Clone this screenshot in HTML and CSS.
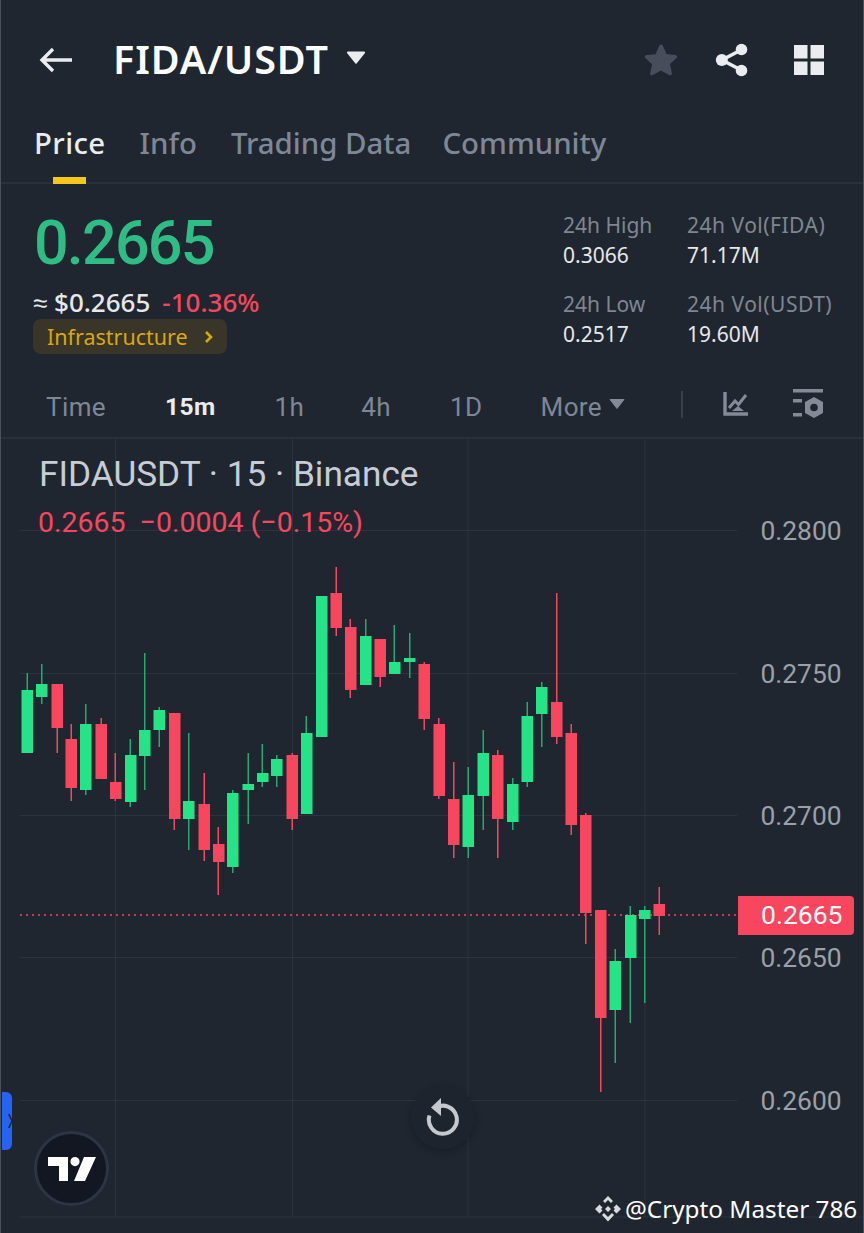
FILE: index.html
```html
<!DOCTYPE html>
<html lang="en">
<head>
<meta charset="utf-8">
<title>FIDA/USDT</title>
<link rel="stylesheet" href="styles.css">
</head>
<body>
<main class="app">
  <header class="topbar">
    <svg class="back" viewBox="0 0 36 30" width="36" height="30"><path d="M34 15H4M15 4 4 15l11 11" fill="none" stroke="#eaecef" stroke-width="3.4"/></svg>
    <h1 class="pair">FIDA/USDT</h1>
    <svg class="caret" viewBox="0 0 22 16" width="22" height="16"><path d="M2 2.5a1 1 0 0 1 1-1h16a1 1 0 0 1 .8 1.7l-8 10a1 1 0 0 1-1.6 0l-8-10A1 1 0 0 1 2 2.5z" fill="#eaecef"/></svg>
    <div class="actions">
      <svg class="act-star" viewBox="0 0 34 34" width="34" height="34"><path d="M17 1.5c1 0 1.600.7 2 1.600l3.500 8 8.700.8c2 .2 2.700 1.800 1.300 3.200l-6.500 6 1.800 8.700c.5 2.100-1 3.100-2.800 2.100L17 27.400 9 32c-1.800 1-3.300 0-2.800-2.100L8 21.200l-6.500-6C.1 13.800.8 12.200 2.800 12l8.700-.8 3.500-8c.4-.9 1-1.700 2-1.700z" fill="#474d5a"/></svg>
      <svg class="act-share" viewBox="0 0 34 34" width="34" height="34"><path d="M26 7 7 17l19 10" fill="none" stroke="#eaecef" stroke-width="3.600"/><circle cx="26.500" cy="6.500" r="5.800" fill="#eaecef"/><circle cx="6.800" cy="17" r="6" fill="#eaecef"/><circle cx="26.500" cy="27.500" r="5.800" fill="#eaecef"/></svg>
      <svg viewBox="0 0 30 30" width="30" height="30"><path d="M0 0h13.500v13.500H0zM16.500 0H30v13.500H16.500zM0 16.500h13.500V30H0zM16.500 16.500H30V30H16.500z" fill="#eaecef"/></svg>
    </div>
  </header>

  <nav class="tabs">
    <a class="tab tab-active">Price</a>
    <a class="tab">Info</a>
    <a class="tab">Trading Data</a>
    <a class="tab">Community</a>
  </nav>

  <section class="ticker">
    <div class="quote">
      <div class="last">0.2665</div>
      <div class="fiat"><span class="approx">≈ $0.2665</span><span class="pct">-10.36%</span></div>
      <div class="tag"><span>Infrastructure</span><svg viewBox="0 0 10 14" width="10" height="14"><path d="M2 2l5 5-5 5" fill="none" stroke="#d8a80f" stroke-width="2.600"/></svg></div>
    </div>
    <dl class="stats">
      <div class="stat"><dt>24h High</dt><dd>0.3066</dd></div>
      <div class="stat"><dt>24h Vol(FIDA)</dt><dd>71.17M</dd></div>
      <div class="stat"><dt>24h Low</dt><dd>0.2517</dd></div>
      <div class="stat"><dt>24h Vol(USDT)</dt><dd>19.60M</dd></div>
    </dl>
  </section>

  <section class="intervals">
    <span class="iv iv-time">Time</span>
    <span class="iv iv-active iv-15m">15m</span>
    <span class="iv iv-1h">1h</span>
    <span class="iv iv-4h">4h</span>
    <span class="iv iv-1d">1D</span>
    <span class="iv iv-more">More<svg viewBox="0 0 16 12" width="16" height="12"><path d="M1 1.500h14L8 10.500z" fill="#848b97" stroke="#848b97" stroke-linejoin="round"/></svg></span>
    <span class="divider"></span>
    <svg class="tool tool-a" viewBox="0 0 26 26" width="26" height="26"><path d="M2 1v22h23" fill="none" stroke="#848b97" stroke-width="3.400"/><path d="M6 17l6-7 3.500 3.500L23 4" fill="none" stroke="#848b97" stroke-width="3"/><path d="M9 20l6-5 6 5z" fill="#848b97"/></svg>
    <svg class="tool tool-b" viewBox="0 0 32 32" width="32" height="32"><path d="M1 0h30v3.500H1zM1 10h9v3.500H1zM1 24h9v3.500H1z" fill="#848b97"/><path d="M22 8l9 5v11l-9 5-9-5V13z" fill="#848b97"/><circle cx="22" cy="18.500" r="3.800" fill="#1f2630"/></svg>
  </section>

  <section class="chart">
    <svg class="plot" viewBox="1 439 862 794" width="862" height="794">
      <g class="grid">
        <path d="M20 530.500H737M20 673.500H737M20 815.500H737M20 957.500H737M20 1100.500H737M20 1217H864"/>
        <path d="M115.500 439V1217M292.500 439V1217M468 439V1217M645 439V1217"/>
      </g>
      <path class="lastline" d="M20 915H738"/>
      <g class="up">
        <rect x="26.500" y="673" width="1.500" height="17"/><rect x="21.500" y="690" width="11.500" height="63"/>
        <rect x="41" y="664" width="1.500" height="40"/><rect x="36" y="684" width="11.500" height="13"/>
        <rect x="85" y="704" width="1.500" height="91"/><rect x="80" y="724" width="11.500" height="66"/>
        <rect x="129.500" y="739" width="1.500" height="68"/><rect x="125" y="755" width="11.500" height="47"/>
        <rect x="144" y="653" width="1.500" height="137"/><rect x="139" y="730" width="11.500" height="26"/>
        <rect x="158.500" y="707" width="1.500" height="40"/><rect x="153.500" y="710" width="11.500" height="20"/>
        <rect x="188" y="733" width="1.500" height="117"/><rect x="183" y="801" width="11.500" height="18"/>
        <rect x="232" y="790" width="1.500" height="83"/><rect x="227" y="793" width="11.500" height="74"/>
        <rect x="247.500" y="753" width="1.500" height="71"/><rect x="242.500" y="784" width="11.500" height="6"/>
        <rect x="261.500" y="744" width="1.500" height="43"/><rect x="257" y="773" width="11.500" height="9"/>
        <rect x="276" y="755" width="1.500" height="32"/><rect x="271" y="759" width="11.500" height="17"/>
        <rect x="305.500" y="716" width="1.500" height="20"/><rect x="301" y="733" width="11.500" height="81"/>
        <rect x="321" y="596" width="1.500" height="1"/><rect x="316" y="596" width="11.500" height="141"/>
        <rect x="365" y="619" width="1.500" height="20"/><rect x="360" y="636" width="11.500" height="49"/>
        <rect x="393.500" y="625" width="1.500" height="40"/><rect x="389" y="662" width="11.500" height="12"/>
        <rect x="409" y="633" width="1.500" height="45"/><rect x="404" y="658" width="11.500" height="4"/>
        <rect x="467.500" y="767" width="1.500" height="91"/><rect x="462.500" y="795" width="11.500" height="52"/>
        <rect x="482.500" y="730" width="1.500" height="100"/><rect x="477.500" y="753" width="11.500" height="43"/>
        <rect x="512" y="778" width="1.500" height="52"/><rect x="507" y="784" width="11.500" height="38"/>
        <rect x="526.500" y="702" width="1.500" height="85"/><rect x="521.500" y="716" width="11.500" height="66"/>
        <rect x="541" y="682" width="1.500" height="65"/><rect x="536" y="687" width="11.500" height="27"/>
        <rect x="614.500" y="949" width="1.500" height="114"/><rect x="609.500" y="961" width="11.500" height="49"/>
        <rect x="629.500" y="906" width="1.500" height="117"/><rect x="625" y="915" width="11.500" height="43"/>
        <rect x="644" y="906" width="1.500" height="97"/><rect x="639" y="910" width="11.500" height="9"/>
      </g>
      <g class="down">
        <rect x="56.500" y="684" width="1.500" height="69"/><rect x="51.500" y="684" width="11.500" height="44"/>
        <rect x="70.500" y="724" width="1.500" height="77"/><rect x="65.500" y="739" width="11.500" height="49"/>
        <rect x="100.500" y="718" width="1.500" height="20"/><rect x="95.500" y="724" width="11.500" height="55"/>
        <rect x="114.500" y="753" width="1.500" height="48"/><rect x="110" y="782" width="11.500" height="17"/>
        <rect x="173.500" y="713" width="1.500" height="117"/><rect x="169" y="713" width="11.500" height="106"/>
        <rect x="203.500" y="773" width="1.500" height="88"/><rect x="198.500" y="804" width="11.500" height="46"/>
        <rect x="217.500" y="827" width="1.500" height="68"/><rect x="213" y="844" width="11.500" height="18"/>
        <rect x="291.500" y="753" width="1.500" height="77"/><rect x="286.500" y="755" width="11.500" height="64"/>
        <rect x="335.500" y="567" width="1.500" height="69"/><rect x="330.500" y="593" width="11.500" height="35"/>
        <rect x="349.500" y="619" width="1.500" height="79"/><rect x="345" y="627" width="11.500" height="63"/>
        <rect x="379.500" y="639" width="1.500" height="48"/><rect x="374.500" y="639" width="11.500" height="38"/>
        <rect x="423.500" y="662" width="1.500" height="68"/><rect x="418.500" y="664" width="11.500" height="55"/>
        <rect x="438" y="718" width="1.500" height="81"/><rect x="433.500" y="724" width="11.500" height="72"/>
        <rect x="453" y="762" width="1.500" height="96"/><rect x="448" y="799" width="11.500" height="46"/>
        <rect x="497" y="750" width="1.500" height="108"/><rect x="492" y="755" width="11.500" height="64"/>
        <rect x="556" y="593" width="1.500" height="151"/><rect x="551" y="702" width="11.500" height="35"/>
        <rect x="570.500" y="724" width="1.500" height="111"/><rect x="565.500" y="733" width="11.500" height="92"/>
        <rect x="585" y="813" width="1.500" height="131"/><rect x="580" y="815" width="11.500" height="98"/>
        <rect x="600" y="910" width="1.500" height="182"/><rect x="595" y="910" width="11.500" height="108"/>
        <rect x="658.500" y="887" width="1.500" height="48"/><rect x="653.500" y="904" width="11.500" height="12"/>
      </g>
      <g class="axis">
        <text x="760.500" y="540">0.2800</text>
        <text x="760.500" y="683">0.2750</text>
        <text x="760.500" y="825">0.2700</text>
        <text x="760.500" y="967">0.2650</text>
        <text x="760.500" y="1110">0.2600</text>
      </g>
    </svg>
    <div class="legend">
      <div class="legend-title">FIDAUSDT · 15 · Binance</div>
      <div class="legend-ohlc"><span>0.2665</span><span>−0.0004 (−0.15%)</span></div>
    </div>
    <div class="price-tag">0.2665</div>
    <div class="side-tab"><svg viewBox="0 0 5 16" width="5" height="16"><path d="M.8 1l3.200 7-3.200 7" fill="none" stroke="#1f2630" stroke-width="1.600"/></svg></div>
    <div class="tv-badge"><svg viewBox="0 0 48 24" width="48" height="24"><path d="M0 0h20v24H11V9H0zM36 0h12L37 24H26zM27 0a4.600 4.600 0 1 1 0 9.200 4.600 4.600 0 0 1 0-9.200z" fill="#fff"/></svg></div>
    <div class="reset"><svg viewBox="0 0 34 40" width="34" height="40"><path d="M10 10.500a14 14 0 1 1-6.500 8" fill="none" stroke="#c5c8ce" stroke-width="4"/><path d="M15 1 5 10.500 15 19z" fill="#c5c8ce"/></svg></div>
    <div class="watermark"><svg viewBox="0 0 28 28" width="28" height="28"><path d="M14 1l5 5-2 2-3-3-3 3-2-2zM5.500 9.500l3 3-1.500 1.500 1.500 1.500-3 3L1 14zM22.500 9.500l4.500 4.500-4.500 4.500-3-3 1.500-1.500-1.500-1.500zM14 11l3 3-3 3-3-3zM8 20l2-2 4 4 4-4 2 2-6 6.500z" fill="#d9dbdf"/></svg><span>@Crypto Master 786</span></div>
  </section>
</main>
</body>
</html>
```

FILE: styles.css
```css
* { box-sizing: border-box; margin: 0; padding: 0; }
html, body { background: #1f2630; }
body { width: 864px; height: 1233px; overflow: hidden; font-family: "Noto Sans", "Liberation Sans", sans-serif; }
.app { width: 864px; height: 1233px; display: flex; flex-direction: column; background: #1f2630; border-left: 1px solid #4b505b; border-right: 1px solid #4b505b; }

.topbar { height: 122px; flex: none; display: flex; align-items: center; padding: 0 39px 2px 37px; }
.back { margin-right: 39px; }
.pair { font-size: 39.500px; font-weight: 600; color: #fff; letter-spacing: .9px; line-height: 1; }
.caret { margin-left: 16px; margin-bottom: 4px; }
.actions { margin-left: auto; display: flex; align-items: center; }
.act-star { margin-right: 37px; }
.act-share { margin-right: 45px; }

.tabs { height: 62px; flex: none; display: flex; gap: 34px; padding: 0 0 0 33px; border-bottom: 2px solid #2a303b; }
.tab { position: relative; font-size: 29.400px; font-weight: 500; color: #7e8796; line-height: 42px; white-space: nowrap; }
.tab-active { color: #eaecef; letter-spacing: .4px; }
.tab-active::after { content: ""; position: absolute; left: 19px; bottom: -2px; width: 33px; height: 7px; background: #f6c51e; }
.tab:last-child { margin-left: -3px; }

.ticker { height: 190px; flex: none; display: flex; justify-content: space-between; padding: 0 32px 0 32px; }
.quote { padding-top: 24px; }
.last { font-family: Roboto, sans-serif; font-weight: 500; font-size: 61px; line-height: 70px; letter-spacing: -1.800px; color: #2ebd85; margin-left: 1px; }
.fiat { display: flex; gap: 12px; height: 30px; margin-top: 9px; font-size: 26px; line-height: 30px; font-weight: 500; white-space: nowrap; }
.approx { color: #e6e8ea; }
.pct { color: #f6465d; }
.tag { display: inline-flex; align-items: center; gap: 16px; height: 35px; margin-top: 2px; padding: 0 13px 0 14px; background: #3a3529; border-radius: 8px; color: #d8a80f; font-size: 21.500px; }
.stats { display: grid; grid-template-columns: 124px 144px; grid-auto-rows: 79px; padding-top: 26px; }
.stat { white-space: nowrap; }
.stat dt { font-size: 21px; color: #7f8691; line-height: 30px; }
.stat:nth-child(even) dt { letter-spacing: .5px; }
.stat dd { font-size: 21px; color: #e6e8ea; line-height: 30px; }

.intervals { height: 65px; flex: none; position: relative; display: flex; align-items: center; border-bottom: 2px solid #2a303b; font-size: 25px; color: #7e8796; padding-top: 2px; }
.iv { flex: none; font-family: Roboto, sans-serif; font-size: 26px; letter-spacing: .4px; line-height: 30px; }
.iv-time { margin-left: 45px; }
.iv-15m { margin-left: 59px; font-size: 24.500px; }
.iv-1h { margin-left: 59px; }
.iv-4h { margin-left: 57px; }
.iv-1d { margin-left: 59px; }
.iv-more { margin-left: 58px; display: flex; align-items: center; gap: 7px; }
.iv-more svg { margin-bottom: 5px; }
.iv-active { color: #eaecef; font-weight: 700; }
.divider { width: 2px; height: 27px; background: #3a404b; margin-left: 56px; margin-bottom: 4px; }
.tool-a { margin-left: 40px; margin-bottom: 6px; }
.tool-b { margin-left: 43px; margin-bottom: 3px; }

.chart { flex: 1; position: relative; overflow: hidden; }
.plot { display: block; }
.grid path { stroke: #2d333e; stroke-width: 1; fill: none; }
.lastline { stroke: #f9465f; stroke-width: 1.500; stroke-dasharray: 2 4; fill: none; }
.up rect { fill: #25e487; }
.down rect { fill: #f9465f; }
.up rect:nth-child(odd) { fill: #27a86f; }
.axis text { font-family: Roboto, sans-serif; font-size: 26.400px; fill: #9ba0a9; }

.legend { position: absolute; left: 38px; top: 14px; }
.legend-title { font-family: Roboto, sans-serif; font-size: 35.200px; line-height: 42px; color: #c8ccd4; }
.legend-ohlc { display: flex; gap: 14px; margin-left: -1px; margin-top: 13px; font-family: Roboto, sans-serif; font-size: 28.500px; line-height: 30px; color: #f9465f; }

.price-tag { position: absolute; left: 737px; top: 457px; width: 116px; height: 39px; padding-left: 23px; background: #f9465f; border-radius: 0 4px 4px 0; color: #fff; font-family: Roboto, sans-serif; font-size: 26.500px; line-height: 38px; }
.side-tab { position: absolute; left: 1px; top: 653px; width: 10px; height: 58px; background: #2563f5; border-radius: 0 6px 6px 0; display: flex; align-items: center; justify-content: flex-end; overflow: visible; }
.side-tab svg { flex: none; margin-right: -1px; }
.tv-badge { position: absolute; left: 33px; top: 692px; width: 75px; height: 75px; display: flex; align-items: center; justify-content: center; background: #131722; border: 3px solid #2e3440; border-radius: 50%; }
.reset { position: absolute; left: 410px; top: 646px; width: 64px; height: 64px; display: flex; align-items: center; justify-content: center; border-radius: 50%; background: #1e242d; box-shadow: 0 3px 6px rgba(10, 13, 18, .3); }
.watermark { position: absolute; left: 593px; top: 752px; display: flex; align-items: center; gap: 3px; color: #fff; font-size: 24.300px; line-height: 36px; white-space: nowrap; }
```
